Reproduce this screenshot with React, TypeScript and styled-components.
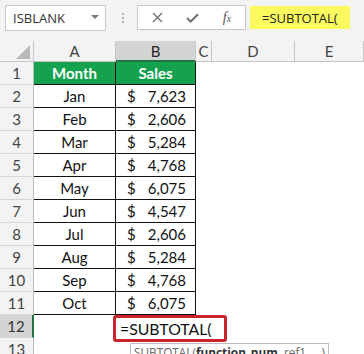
import React from "react";
import styled, { createGlobalStyle } from "styled-components";

const Global = createGlobalStyle`
  html, body { margin: 0; padding: 0; background: #fff; overflow: hidden; }
  body { font-family: Lato, "Liberation Sans", sans-serif; }
  *, *::before, *::after { box-sizing: border-box; }
`;

const Page = styled.div`
  width: 364px;
  height: 354px;
  overflow: hidden;
  background: #fff;
`;

const Toolbar = styled.div`
  height: 41px;
  background: #f3f3f3;
  display: flex;
  align-items: flex-start;
  padding: 5px 0 0 5px;
`;

const NameBox = styled.div`
  width: 101px;
  height: 26px;
  background: #fff;
  border: 1px solid #c8c8c8;
  display: flex;
  align-items: center;
  justify-content: space-between;
  padding: 0 6px 0 7px;
  font-family: "Open Sans", sans-serif;
  font-size: 13px;
  color: #333;
`;

const DropArrow = styled.span`
  width: 0;
  height: 0;
  border-left: 4px solid transparent;
  border-right: 4px solid transparent;
  border-top: 4px solid #7a7a7a;
  margin-bottom: 2px;
`;

const Dots = styled.div`
  width: 3px;
  height: 26px;
  margin: 0 13px 0 15px;
  display: flex;
  flex-direction: column;
  justify-content: center;
  align-items: center;
  gap: 2px;
`;

const Dot = styled.span`
  width: 2px;
  height: 2px;
  background: #b4b4b4;
`;

const FxBox = styled.div`
  width: 109px;
  height: 25px;
  background: #fff;
  border: 1px solid #c8c8c8;
  display: grid;
  grid-template-columns: 38px 33px 36px;
  align-items: center;
  justify-items: center;
`;

const FxText = styled.span`
  font-family: "Liberation Serif", serif;
  font-style: italic;
  font-size: 14px;
  color: #555;
  line-height: 1;
  & > small {
    font-size: 10px;
  }
`;

const FormulaInput = styled.div`
  margin: 1px 0 0 4px;
  width: 100px;
  height: 23px;
  background: #fafa5e;
  display: flex;
  align-items: center;
  padding-left: 12px;
  font-family: "Open Sans", sans-serif;
  font-size: 13px;
  color: #222;
`;

const COLS = "34px 82px 80px 16px 83px 1fr";

const HeaderRow = styled.div`
  display: grid;
  grid-template-columns: ${COLS};
  height: 21px;
  background: #f3f3f3;
`;

const Corner = styled.div`
  border-right: 1px solid #c6c6c6;
  border-bottom: 1px solid #c6c6c6;
  display: flex;
  align-items: flex-end;
  justify-content: flex-end;
  padding: 0 3px 2px 0;
`;

const ColHeader = styled.div<{ $active?: boolean }>`
  display: flex;
  align-items: center;
  justify-content: center;
  font-size: 15px;
  color: ${(p) => (p.$active ? "#262626" : "#444")};
  background: ${(p) => (p.$active ? "#d4d4d4" : "#f3f3f3")};
  border-right: 1px solid #c6c6c6;
  border-bottom: ${(p) => (p.$active ? "2px solid #217346" : "1px solid #c6c6c6")};
`;

const Row = styled.div`
  display: grid;
  grid-template-columns: ${COLS};
  height: 23px;
`;

const RowHeader = styled.div<{ $active?: boolean }>`
  display: flex;
  align-items: center;
  justify-content: center;
  font-size: 15px;
  color: ${(p) => (p.$active ? "#333" : "#444")};
  background: ${(p) => (p.$active ? "#d4d4d4" : "#f3f3f3")};
  border-right: ${(p) => (p.$active ? "2px solid #217346" : "1px solid #bdbdbd")};
  border-bottom: 1px solid #d6d6d6;
`;

const Cell = styled.div<{ $boxed?: boolean; $head?: boolean }>`
  position: relative;
  display: flex;
  align-items: center;
  justify-content: center;
  font-size: 15px;
  color: ${(p) => (p.$head ? "#fff" : "#111")};
  font-weight: ${(p) => (p.$head ? 700 : 400)};
  background: ${(p) => (p.$head ? "#14a24f" : "#fff")};
  border-right: ${(p) => (p.$boxed ? "1px solid #111" : "none")};
  border-bottom: ${(p) => (p.$boxed ? "1px solid #111" : "none")};
`;

const MoneyCell = styled(Cell)`
  justify-content: space-between;
  padding: 0 9px 0 11px;
`;

const EditBox = styled.div`
  position: absolute;
  left: -3px;
  top: 0;
  width: 114px;
  height: 27px;
  z-index: 2;
  background: #fff;
  border: 3px solid #c8242c;
  border-radius: 3px;
  display: flex;
  align-items: center;
  padding-left: 4px;
  font-size: 15.8px;
  color: #111;
`;

const Tip = styled.div`
  position: absolute;
  left: 14px;
  top: 28px;
  z-index: 3;
  white-space: nowrap;
  background: #fff;
  border: 1px solid #bdbdbd;
  padding: 0 3px;
  height: 19px;
  font-family: "Open Sans", sans-serif;
  font-size: 11.8px;
  color: #666;
  & > b {
    color: #333;
    font-weight: 700;
  }
`;

const data: [string, string][] = [
  ["Jan", "7,623"],
  ["Feb", "2,606"],
  ["Mar", "5,284"],
  ["Apr", "4,768"],
  ["May", "6,075"],
  ["Jun", "4,547"],
  ["Jul", "2,606"],
  ["Aug", "5,284"],
  ["Sep", "4,768"],
  ["Oct", "6,075"],
];

const Empty = () => (
  <>
    <Cell />
    <Cell />
    <Cell />
  </>
);

export default function App() {
  return (
    <Page>
      <Global />
      <Toolbar>
        <NameBox>
          <span>ISBLANK</span>
          <DropArrow />
        </NameBox>
        <Dots>
          <Dot />
          <Dot />
          <Dot />
        </Dots>
        <FxBox>
          <svg width="11" height="11" viewBox="0 0 11 11">
            <path d="M1 1 L10 10 M10 1 L1 10" stroke="#6e6e6e" strokeWidth="1.3" fill="none" />
          </svg>
          <svg width="13" height="10" viewBox="0 0 13 10">
            <path d="M1 5 L4.6 8.6 L12 1.2" stroke="#6e6e6e" strokeWidth="2" fill="none" />
          </svg>
          <FxText>
            f<small>x</small>
          </FxText>
        </FxBox>
        <FormulaInput>=SUBTOTAL(</FormulaInput>
      </Toolbar>

      <HeaderRow>
        <Corner>
          <svg width="14" height="14" viewBox="0 0 14 14">
            <polygon points="14,0 14,14 0,14" fill="#b8b8b8" />
          </svg>
        </Corner>
        <ColHeader>A</ColHeader>
        <ColHeader $active>B</ColHeader>
        <ColHeader>C</ColHeader>
        <ColHeader>D</ColHeader>
        <ColHeader>E</ColHeader>
      </HeaderRow>

      <Row>
        <RowHeader>1</RowHeader>
        <Cell $boxed $head>Month</Cell>
        <Cell $boxed $head>Sales</Cell>
        <Empty />
      </Row>
      {data.map(([m, v], i) => (
        <Row key={m}>
          <RowHeader>{i + 2}</RowHeader>
          <Cell $boxed>{m}</Cell>
          <MoneyCell $boxed>
            <span>$</span>
            <span>{v}</span>
          </MoneyCell>
          <Empty />
        </Row>
      ))}
      <Row>
        <RowHeader $active>12</RowHeader>
        <Cell />
        <Cell>
          <EditBox>=SUBTOTAL(</EditBox>
          <Tip>
            SUBTOTAL(<b>function_num</b>, ref1, ...)
          </Tip>
        </Cell>
        <Empty />
      </Row>
      <Row>
        <RowHeader>13</RowHeader>
        <Cell />
        <Cell />
        <Empty />
      </Row>
    </Page>
  );
}
